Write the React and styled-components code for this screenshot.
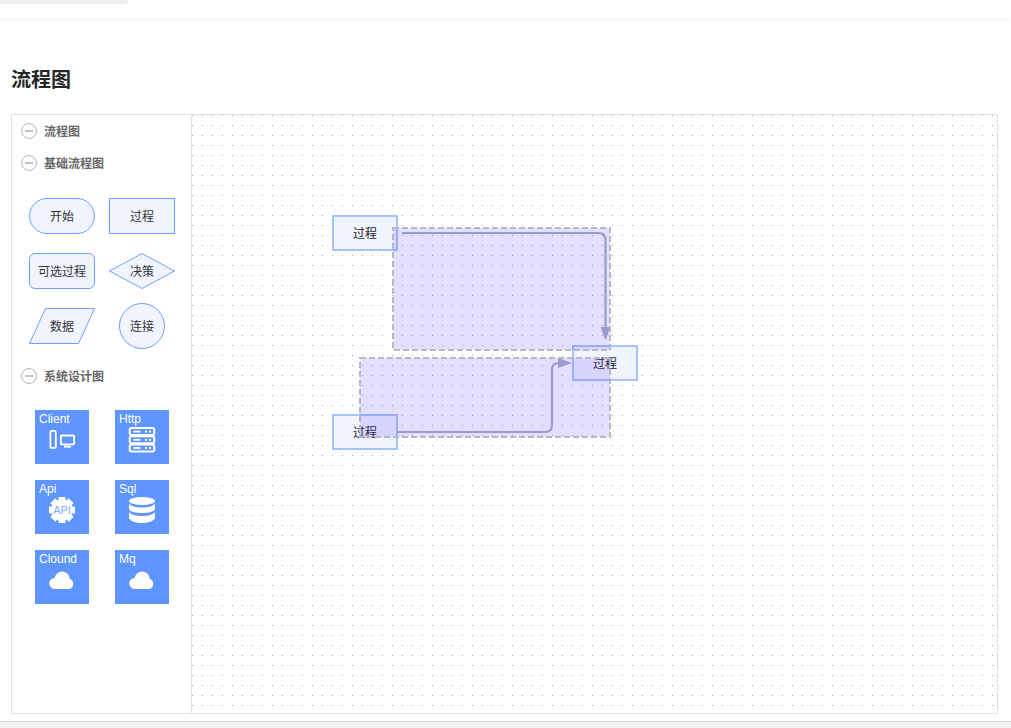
import React from "react";
import styled, { createGlobalStyle } from "styled-components";

const CJK = `"Noto Sans CJK SC", "Noto Sans", "Liberation Sans", sans-serif`;

const Global = createGlobalStyle`
  html, body { margin: 0; padding: 0; height: 100%; background: #fff; overflow: hidden; }
  #root { height: 100%; }
  * { box-sizing: border-box; }
`;

const Page = styled.div`
  height: 100vh;
  display: flex;
  flex-direction: column;
  font-family: ${CJK};
`;
const TopBar = styled.header`
  height: 18px;
  flex: none;
  background: #fff;
  box-shadow: 0 2px 5px rgba(0, 0, 0, 0.05);
`;
const TopPill = styled.div`
  width: 128px;
  height: 4px;
  background: #eceef1;
  border-bottom-right-radius: 8px;
`;
const Main = styled.main`
  flex: 1;
  padding: 0 13px 0 11px;
`;
const Title = styled.h1`
  margin: 0;
  height: 96px;
  padding-top: 47px;
  font-size: 20px;
  line-height: 28px;
  font-weight: 700;
  color: #262626;
`;
const Workspace = styled.section`
  height: 600px;
  display: flex;
  border: 1px solid #e0e0e6;
`;
const Sidebar = styled.aside`
  width: 180px;
  flex: none;
  border-right: 1px solid #e0e0e6;
  background: #fff;
`;
const GroupHeader = styled.div`
  height: 32px;
  padding-left: 9px;
  display: flex;
  align-items: center;
  gap: 7px;
  font-size: 12px;
  font-weight: 700;
  color: #666;
`;
const GroupLabel = styled.span`
  padding-bottom: 2px;
`;
const Collapse = styled.span`
  width: 16px;
  height: 16px;
  margin-top: -1px;
  border: 1.5px solid #b4b4b4;
  border-radius: 50%;
  display: flex;
  align-items: center;
  justify-content: center;
  &::before {
    content: "";
    width: 8px;
    height: 2px;
    background: #c4c4c4;
  }
`;
const ShapeGrid = styled.div`
  display: grid;
  grid-template-columns: 66px 66px;
  grid-auto-rows: 36px;
  column-gap: 14px;
  row-gap: 19px;
  padding: 19px 0 16px 17px;
`;
const Shape = styled.div`
  position: relative;
  place-self: center;
  width: ${(p) => p.$w || 66}px;
  height: ${(p) => p.$h || 36}px;
  padding-bottom: 2px;
  display: flex;
  align-items: center;
  justify-content: center;
  font-size: 12px;
  color: #333;
  background: ${(p) => (p.$bare ? "transparent" : "#eff4ff")};
  border: ${(p) => (p.$bare ? "none" : "1px solid #6f9fff")};
  border-radius: ${(p) => p.$r || 0};
`;
const ShapeOutline = styled.svg`
  position: absolute;
  inset: 0;
  width: 100%;
  height: 100%;
`;
const ShapeLabel = styled.span`
  position: relative;
`;
const IconGrid = styled.div`
  display: grid;
  grid-template-columns: 54px 54px;
  grid-auto-rows: 54px;
  column-gap: 26px;
  row-gap: 16px;
  padding: 18px 0 0 23px;
`;
const SysTile = styled.div`
  background: #5f95ff;
  color: #fff;
  font-family: "Liberation Sans", Arial, sans-serif;
  font-size: 12px;
  line-height: 14px;
  padding: 2px 0 0 4px;
  display: flex;
  flex-direction: column;
`;
const TileIcon = styled.svg`
  display: block;
  width: 54px;
  height: 38px;
  margin-left: -4px;
`;
const Canvas = styled.div`
  position: relative;
  flex: 1;
  overflow: hidden;
  background-color: #fff;
  background-image: conic-gradient(at 1px 1px, transparent 270deg, #a8a8a8 0);
  background-size: 10px 10px;
`;
const Node = styled.div`
  position: absolute;
  left: ${(p) => p.$x}px;
  top: ${(p) => p.$y}px;
  width: 66px;
  height: 36px;
  padding-bottom: 2px;
  background: #eff4ff;
  border: 2px solid #a5c3ff;
  display: flex;
  align-items: center;
  justify-content: center;
  font-size: 12px;
  color: #262626;
`;
const Edges = styled.svg`
  position: absolute;
  inset: 0;
  width: 100%;
  height: 100%;
`;
const Selection = styled.svg`
  position: absolute;
  left: ${(p) => p.$x}px;
  top: ${(p) => p.$y}px;
  width: ${(p) => p.$w}px;
  height: ${(p) => p.$h}px;
`;
const Footer = styled.footer`
  height: 7px;
  flex: none;
  background: #f2f2f2;
  border-top: 1px solid #d0d3d8;
`;

const SelectionBox = ({ x, y, w, h }) => (
  <Selection $x={x} $y={y} $w={w} $h={h}>
    <rect
      x="1"
      y="1"
      width={w - 2}
      height={h - 2}
      fill="rgba(92, 60, 255, 0.17)"
      stroke="#b8b8c0"
      strokeWidth="2"
      strokeDasharray="6 3"
    />
  </Selection>
);

const Gear = () => (
  <g>
    {[0, 45, 90, 135, 180, 225, 270, 315].map((a) => (
      <rect key={a} x="23.5" y="1" width="7" height="6" fill="#fff" transform={`rotate(${a} 27 14)`} />
    ))}
    <circle cx="27" cy="14" r="10.5" fill="#fff" />
    <text x="27" y="18" textAnchor="middle" fontSize="11" fill="#7fa9ff" fontFamily="Liberation Sans, sans-serif">API</text>
  </g>
);

const CLOUD = "M20 23H34A5.200 5.200 0 0 0 34.800 13A7.700 7.700 0 0 0 19.500 12A5.500 5.500 0 0 0 20 23Z";

const ICONS = {
  client: (
    <g fill="none" stroke="#fff" strokeWidth="1.8">
      <rect x="15.400" y="4.900" width="5.400" height="17" rx="1" />
      <rect x="25.900" y="9.500" width="13.200" height="8.800" rx="0.800" />
      <path d="M29 20.600h7" strokeWidth="2" />
    </g>
  ),
  http: (
    <g>
      {[0, 8.2, 16.4].map((d) => (
        <g key={d}>
          <rect x="14.700" y={2 + d} width="24.600" height="7" rx="2" fill="none" stroke="#fff" strokeWidth="2" />
          <rect x="18.500" y={4.700 + d} width="7" height="1.800" fill="#fff" />
          <rect x="30" y={4.700 + d} width="2" height="1.800" fill="#fff" />
          <rect x="34" y={4.700 + d} width="2" height="1.800" fill="#fff" />
        </g>
      ))}
    </g>
  ),
  api: <Gear />,
  sql: (
    <g fill="#fff">
      <ellipse cx="27" cy="5" rx="13" ry="4" />
      <path d="M14 7.500c2 3 7.500 4 13 4s11-1 13-4v5.500c-1 3-7 4-13 4s-12-1-13-4Z" />
      <path d="M14 16c2 3 7.500 4 13 4s11-1 13-4v6c-1 3-7 5-13 5s-12-2-13-5Z" />
    </g>
  ),
  cloud: <path d={CLOUD} fill="#fff" />,
};

const TILES = [
  ["Client", "client"],
  ["Http", "http"],
  ["Api", "api"],
  ["Sql", "sql"],
  ["Clound", "cloud"],
  ["Mq", "cloud"],
];

export default function App() {
  return (
    <Page>
      <Global />
      <TopBar>
        <TopPill />
      </TopBar>
      <Main>
        <Title>流程图</Title>
        <Workspace>
          <Sidebar>
            <GroupHeader><Collapse /><GroupLabel>流程图</GroupLabel></GroupHeader>
            <GroupHeader><Collapse /><GroupLabel>基础流程图</GroupLabel></GroupHeader>
            <ShapeGrid>
              <Shape $r="18px">开始</Shape>
              <Shape>过程</Shape>
              <Shape $r="6px">可选过程</Shape>
              <Shape $bare>
                <ShapeOutline viewBox="0 0 66 36">
                  <polygon points="33,0.500 65.500,18 33,35.500 0.500,18" fill="#eff4ff" stroke="#6f9fff" />
                </ShapeOutline>
                <ShapeLabel>决策</ShapeLabel>
              </Shape>
              <Shape $bare>
                <ShapeOutline viewBox="0 0 66 36">
                  <polygon points="16.500,0.500 65.500,0.500 49.500,35.500 0.500,35.500" fill="#eff4ff" stroke="#6f9fff" />
                </ShapeOutline>
                <ShapeLabel>数据</ShapeLabel>
              </Shape>
              <Shape $w={46} $h={46} $r="50%">连接</Shape>
            </ShapeGrid>
            <GroupHeader><Collapse /><GroupLabel>系统设计图</GroupLabel></GroupHeader>
            <IconGrid>
              {TILES.map(([label, icon]) => (
                <SysTile key={label}>
                  {label}
                  <TileIcon viewBox="0 0 54 38">{ICONS[icon]}</TileIcon>
                </SysTile>
              ))}
            </IconGrid>
          </Sidebar>
          <Canvas>
            <Node $x={140} $y={100}>过程</Node>
            <Node $x={380} $y={230}>过程</Node>
            <Node $x={140} $y={299}>过程</Node>
            <Edges>
              <g fill="none" stroke="#a2b1c3" strokeWidth="2.200">
                <path d="M210 118H406.500Q413.500 118 413.500 125V213" />
                <path d="M206 317H353Q360 317 360 310V255Q360 248 367 248" />
              </g>
              <g fill="#a2b1c3">
                <polygon points="408.500,212 418.500,212 413.500,225.500" />
                <polygon points="366,243 366,253 380,248" />
              </g>
            </Edges>
            <SelectionBox x={200} y={112} w={219} h={124} />
            <SelectionBox x={167} y={242} w={252} h={81} />
          </Canvas>
        </Workspace>
      </Main>
      <Footer />
    </Page>
  );
}
